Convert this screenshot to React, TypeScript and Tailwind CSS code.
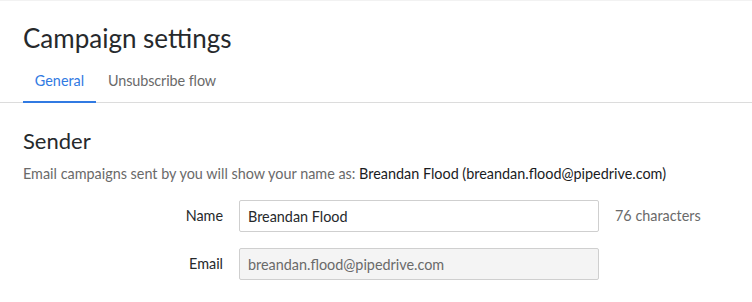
export default function App() {
  return (
    <div className="w-[752px] h-[302px] bg-white border-t border-[#f2f2f2] text-[#222] font-['Lato','Noto_Sans',sans-serif] overflow-hidden">
      <h1 className="pl-[23px] pt-[20px] text-[26px] leading-[34px] text-[#26292c]">Campaign settings</h1>

      <div className="mt-[15px] flex border-b border-[#dcdcdc] pl-[23px] text-[14.4px]">
        <div className="w-[73px] text-center text-[#317ae2] border-b-2 border-[#317ae2] pb-[9px] -mb-px">General</div>
        <div className="px-3 text-[#6a6a6a] pb-[9px] tracking-[-0.1px]">Unsubscribe flow</div>
      </div>

      <div className="px-[23px]">
        <h2 className="mt-[24px] text-[22px] leading-[28px] text-[#26292c]">Sender</h2>
        <p className="mt-[8px] text-[14.4px] text-[#6a6a6a]">
          Email campaigns sent by you will show your name as:{" "}
          <span className="text-[#1a1c1e]">Breandan Flood (breandan.flood@pipedrive.com)</span>
        </p>

        <div className="mt-[16px] flex flex-col gap-4 text-[14.4px]">
          <div className="flex items-center">
            <label className="w-[216px] text-right pr-4 text-[#26292c]">Name</label>
            <input
              className="w-[360px] h-[32px] border border-[#cfcfcf] rounded-[2px] px-2 text-[#26292c] outline-none"
              defaultValue="Breandan Flood"
            />
            <span className="ml-4 text-[#6a6a6a]">76 characters</span>
          </div>
          <div className="flex items-center">
            <label className="w-[216px] text-right pr-4 text-[#26292c]">Email</label>
            <input
              className="w-[360px] h-[32px] border border-[#cfcfcf] rounded-[2px] px-2 bg-[#f4f4f4] text-[#6a6a6a] outline-none"
              defaultValue="breandan.flood@pipedrive.com"
              disabled
            />
          </div>
        </div>
      </div>
    </div>
  );
}
